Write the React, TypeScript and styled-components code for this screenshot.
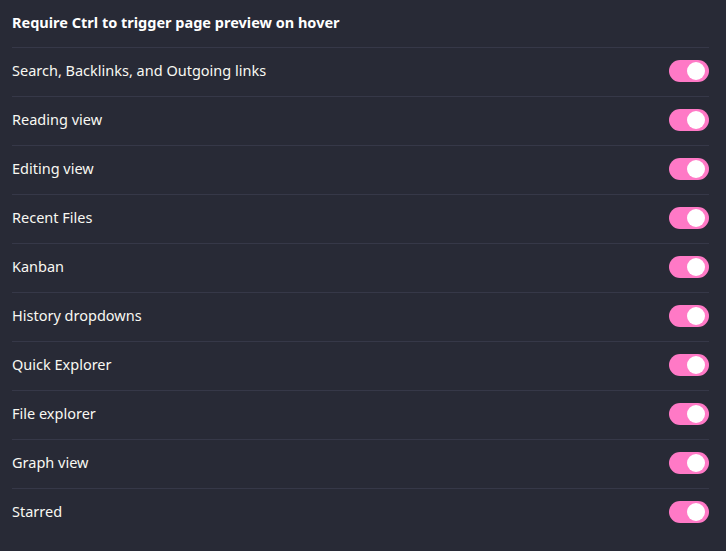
import React from "react";
import styled, { createGlobalStyle } from "styled-components";

const GlobalStyle = createGlobalStyle`
  html, body { margin: 0; padding: 0; background: #282a36; }
  body { font-family: "Noto Sans", "Lato", sans-serif; color: #f8f8f2; }
  * { box-sizing: border-box; }
`;

const Page = styled.div`
  width: 726px;
  height: 551px;
  background: #282a36;
  padding: 0 17px 0 12px;
  overflow: hidden;
`;

const Heading = styled.div`
  height: 48px;
  display: flex;
  align-items: center;
  font-size: 14.5px;
  font-weight: 700;
  color: #ffffff;
  border-bottom: 1px solid #363848;
  padding-bottom: 4px;
`;

const Row = styled.div<{ $last?: boolean }>`
  height: 49px;
  display: flex;
  align-items: center;
  justify-content: space-between;
  border-bottom: ${(p) => (p.$last ? "none" : "1px solid #363848")};
  padding-bottom: 5px;
`;

const Label = styled.span`
  font-size: 14.5px;
  color: #f8f8f2;
`;

const Toggle = styled.div<{ $on: boolean }>`
  position: relative;
  width: 40px;
  height: 22px;
  border-radius: 11px;
  background: ${(p) => (p.$on ? "#ff79c6" : "#44475a")};
  flex-shrink: 0;
  margin-top: 2px;
`;

const Knob = styled.span<{ $on: boolean }>`
  position: absolute;
  top: 2px;
  left: ${(p) => (p.$on ? "18px" : "3px")};
  width: 18px;
  height: 18px;
  border-radius: 50%;
  background: #ffffff;
`;

const items = [
  "Search, Backlinks, and Outgoing links",
  "Reading view",
  "Editing view",
  "Recent Files",
  "Kanban",
  "History dropdowns",
  "Quick Explorer",
  "File explorer",
  "Graph view",
  "Starred",
];

export default function App() {
  return (
    <>
      <GlobalStyle />
      <Page>
        <Heading>Require Ctrl to trigger page preview on hover</Heading>
        {items.map((label, i) => (
          <Row key={label} $last={i === items.length - 1}>
            <Label>{label}</Label>
            <Toggle $on>
              <Knob $on />
            </Toggle>
          </Row>
        ))}
      </Page>
    </>
  );
}
